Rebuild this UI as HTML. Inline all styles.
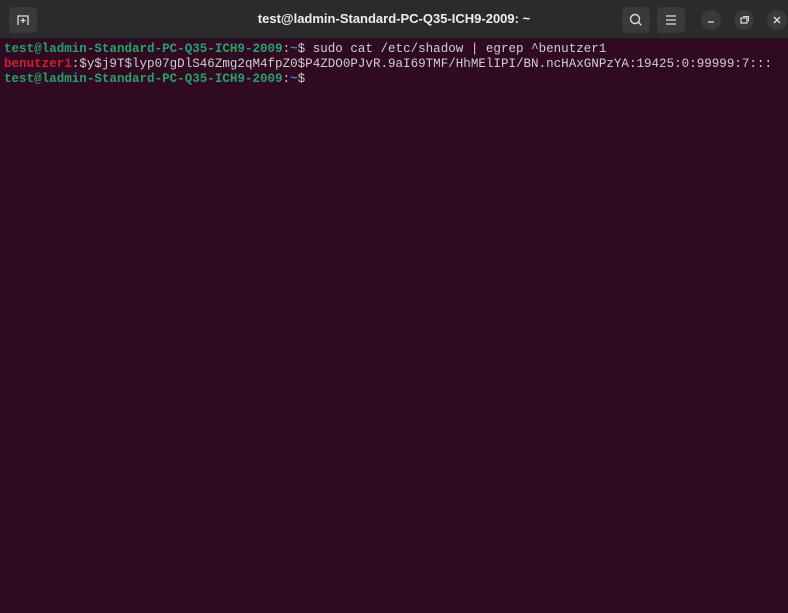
<!DOCTYPE html>
<html><head><meta charset="utf-8"><style>
html,body{margin:0;padding:0;width:788px;height:613px;overflow:hidden;background:#2f0a22;}
.tb{position:absolute;left:0;top:0;width:788px;height:38px;background:#2b2b2b;border-bottom:1px solid #1e1e1e;}
.title{position:absolute;left:0;right:0;top:11px;text-align:center;font:bold 13px "Liberation Sans",sans-serif;color:#eeeeee;}
.btn{position:absolute;top:7px;width:28px;height:26px;border-radius:5px;background:#3a3a3a;}
.cbtn{position:absolute;top:10px;width:20px;height:20px;border-radius:50%;background:#3a3a3a;}
.term{position:absolute;left:4px;top:42px;font:12.55px/15px "Liberation Mono",monospace;color:#d0cfcc;white-space:pre;}
.g{color:#26a269;font-weight:bold}.b{color:#3f7fd0;font-weight:bold}.r{color:#d0202e;font-weight:bold}
</style></head><body>
<div class="tb">
 <div class="btn" style="left:9px"><svg width="28" height="26"><path d="M9 18V9h10v9" fill="none" stroke="#ddd" stroke-width="1.3"/><path d="M14 11v5M11.5 13.5h5" stroke="#ddd" stroke-width="1.3"/></svg></div>
 <div class="title">test@ladmin-Standard-PC-Q35-ICH9-2009: ~</div>
 <div class="btn" style="left:622px"><svg width="28" height="26"><circle cx="13" cy="12" r="4.5" fill="none" stroke="#ddd" stroke-width="1.4"/><path d="M16.3 15.3l3 3" stroke="#ddd" stroke-width="1.4"/></svg></div>
 <div class="btn" style="left:657px"><svg width="28" height="26"><path d="M9 9h10M9 13h10M9 17h10" stroke="#ddd" stroke-width="1.3"/></svg></div>
 <div class="cbtn" style="left:701px"><svg width="20" height="20"><path d="M7 12h6" stroke="#ddd" stroke-width="1.3"/></svg></div>
 <div class="cbtn" style="left:734px"><svg width="20" height="20"><rect x="7" y="8" width="6" height="5" fill="none" stroke="#ddd" stroke-width="1.2"/><path d="M9 6.5h5.5v5" fill="none" stroke="#ddd" stroke-width="1"/></svg></div>
 <div class="cbtn" style="left:767px"><svg width="20" height="20"><path d="M7 7l6 6M13 7l-6 6" stroke="#ddd" stroke-width="1.4"/></svg></div>
</div>
<div class="term"><span class="g">test@ladmin-Standard-PC-Q35-ICH9-2009</span>:<span class="b">~</span>$ sudo cat /etc/shadow | egrep ^benutzer1
<span class="r">benutzer1</span>:$y$j9T$lyp07gDlS46Zmg2qM4fpZ0$P4ZDO0PJvR.9aI69TMF/HhMElIPI/BN.ncHAxGNPzYA:19425:0:99999:7:::
<span class="g">test@ladmin-Standard-PC-Q35-ICH9-2009</span>:<span class="b">~</span>$ </div>
</body></html>
